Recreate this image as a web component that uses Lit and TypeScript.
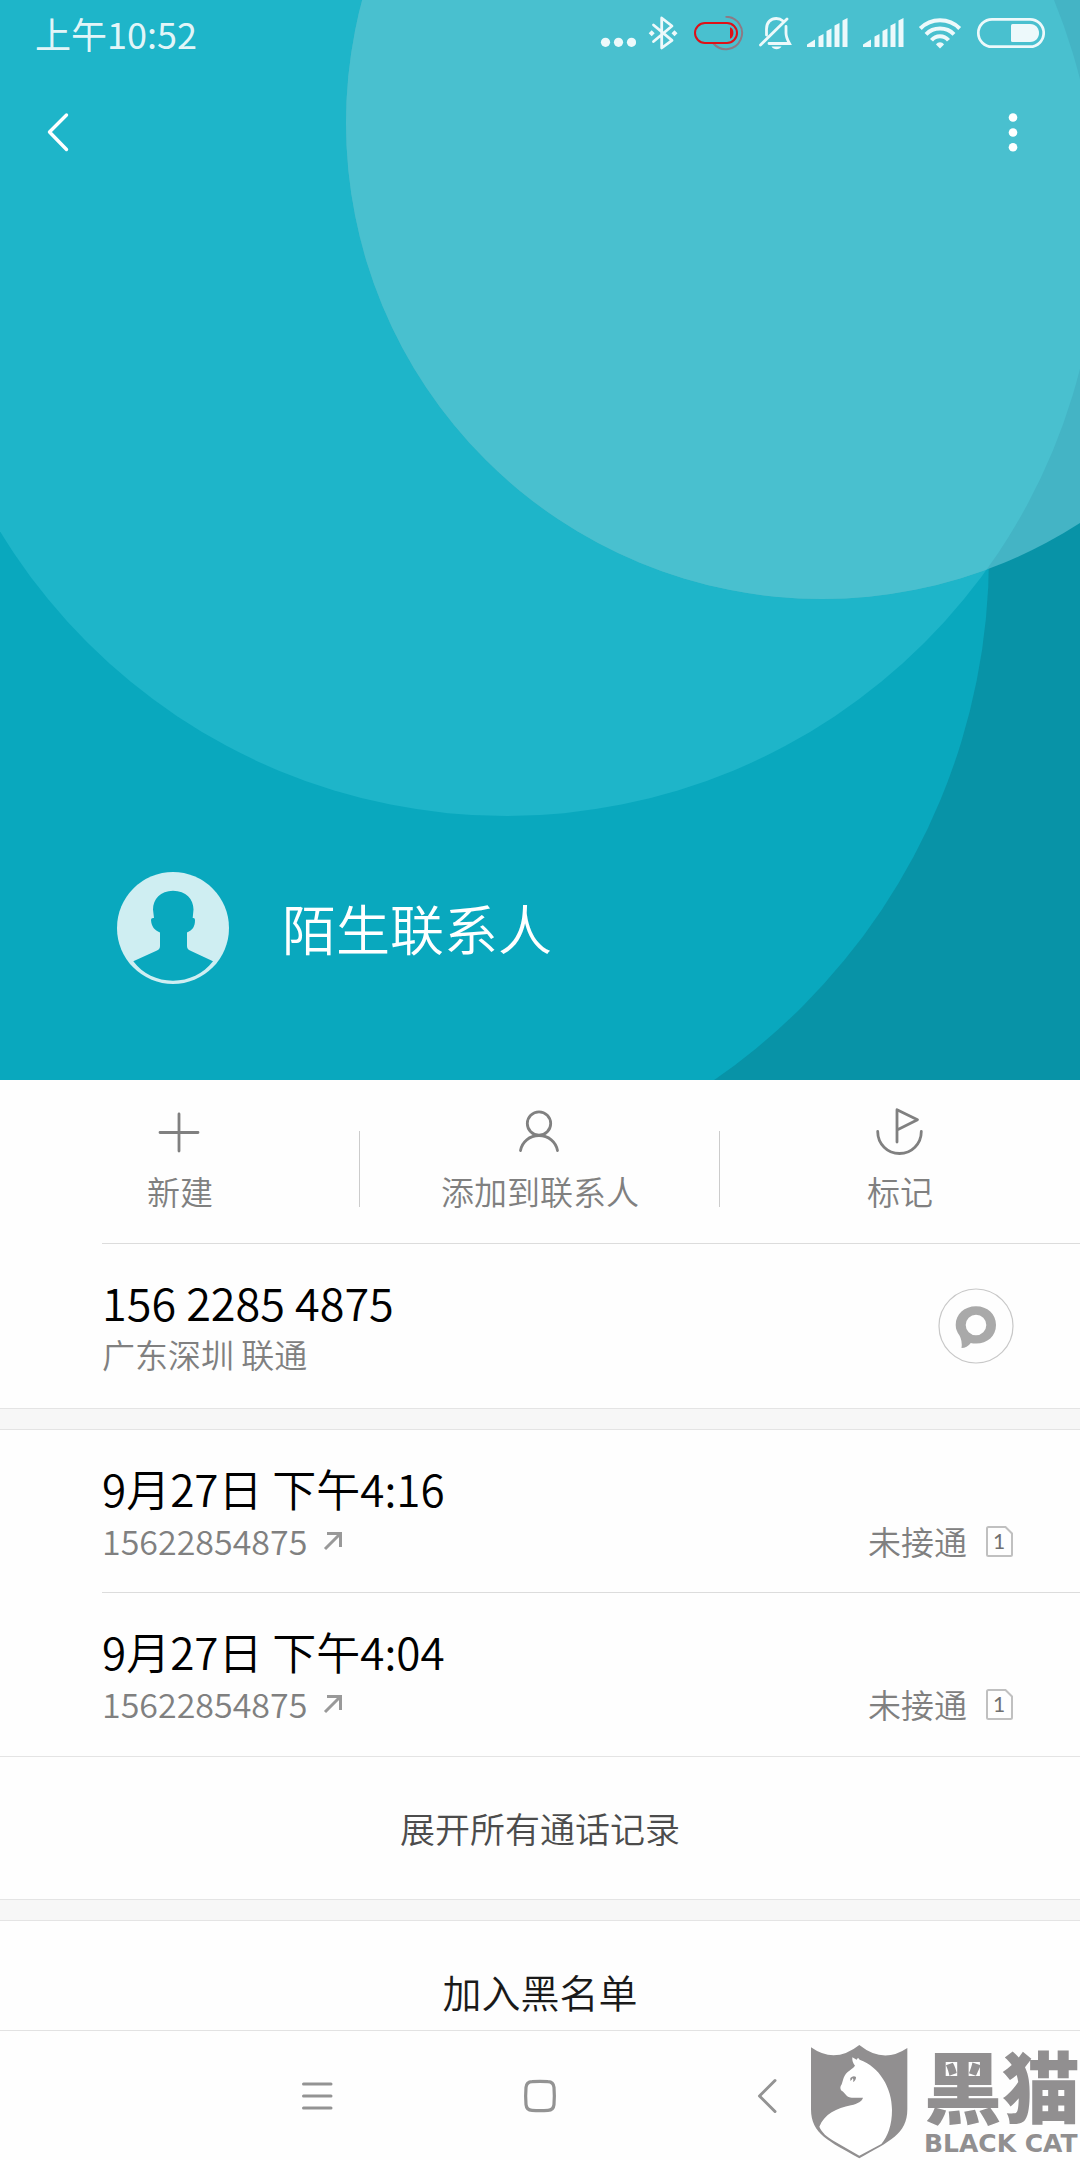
import { LitElement, html, css, svg } from "lit";
import { customElement, property } from "lit/decorators.js";

interface Call {
  when: string;
  number: string;
  result: string;
  sim: string;
}

const calls: Call[] = [
  { when: "9月27日 下午4:16", number: "15622854875", result: "未接通", sim: "1" },
  { when: "9月27日 下午4:04", number: "15622854875", result: "未接通", sim: "1" },
];

const actions = [
  { label: "新建", icon: svg`<path d="M23 6V43M4 24.500H42" />` },
  {
    label: "添加到联系人",
    icon: svg`<circle cx="23" cy="15.500" r="11.700" /><path d="M4.500 42.500C6 34 13.500 27.500 23 27.500S40 34 41.500 42.500" />`,
  },
  {
    label: "标记",
    icon: svg`<path d="M21 34V1.700L41.500 11.700L21 22M1.700 23.500C1.700 36 11.500 45.500 23.500 45.500S45.300 36 45.300 23.500" />`,
  },
];

const signal = html`<svg width="46" height="36" viewBox="0 0 46 36" fill="currentColor" aria-hidden="true">
  <path d="M3 31V28.500L11 23.500V31ZM14.500 31V20.500L19.500 18V31ZM22.500 31V15L27.500 12.500V31ZM30.500 31V9.500L35.500 7V31ZM38.500 31V4.500L43.500 2V31Z" />
</svg>`;

@customElement("status-bar")
class StatusBar extends LitElement {
  static styles = css`
    :host {
      display: flex;
      align-items: center;
      justify-content: space-between;
      height: 68px;
      padding: 0 35px;
      color: rgba(255, 255, 255, 0.9);
    }
    .time {
      font-size: 36px;
      line-height: 50px;
      padding-bottom: 2px;
      font-weight: 400;
    }
    .icons {
      display: flex;
      gap: 10px;
    }
    svg {
      display: block;
    }
  `;
  render() {
    return html`
      <span class="time">上午10:52</span>
      <div class="icons">
        <svg width="38" height="36" viewBox="0 0 38 36" fill="currentColor" aria-hidden="true">
          <circle cx="7.500" cy="26.300" r="4.600" /><circle cx="20.500" cy="26.300" r="4.600" /><circle cx="33.500" cy="26.300" r="4.600" />
        </svg>
        <svg width="36" height="36" viewBox="0 0 36 36" fill="none" stroke="currentColor" stroke-width="2.800" aria-hidden="true">
          <path d="M7.500 9L26 24.300L15.700 32V2L26 10L7.500 25.500" stroke-linejoin="round" stroke-linecap="round" />
          <path d="M5.700 14.300l3 3l-3 3l-3-3zM28.500 14.300l3 3l-3 3l-3-3z" fill="currentColor" stroke="none" />
        </svg>
        <svg width="54" height="36" viewBox="0 0 54 36" fill="none" stroke-width="2" aria-hidden="true">
          <path d="M33.500 .800A16.200 16.200 0 1 1 21.500 27.500" stroke="#8c7a85" />
          <rect x="3" y="7" width="42" height="20" rx="10" stroke="#dd1118" />
          <path d="M38 11.300C42.600 12.300 42.600 21.700 38 22.700Z" fill="#dd1118" />
        </svg>
        <svg width="38" height="36" viewBox="0 0 38 36" fill="none" stroke="currentColor" stroke-width="2.800" stroke-linecap="round" aria-hidden="true">
          <path d="M10.500 19V13C10.500 6 15 2.500 20.300 2.500C23 2.500 25 3.200 27 5M4.500 29L31 3" />
          <path d="M30 10.500V17C30 21 31.500 24 33.500 27.500H13" />
          <path d="M15.500 30.500H25.500C23.500 34 17.500 34 15.500 30.500Z" fill="currentColor" stroke="none" />
        </svg>
        ${signal}${signal}
        <svg width="48" height="36" viewBox="0 0 48 36" fill="none" stroke="currentColor" stroke-width="4" aria-hidden="true">
          <path d="M4.300 12.500C15 1.500 33 1.500 43.700 12.500M10 18.300C17.500 10.600 30.500 10.600 38 18.300M15.500 24.300C20 19 28 19 32.500 24.300" />
          <path d="M20 28.500C22 25.500 26 25.500 28 28.500L24 32.500Z" fill="currentColor" stroke="none" />
        </svg>
        <svg width="71" height="36" viewBox="0 0 71 36" fill="none" aria-hidden="true">
          <rect x="4.300" y="3.300" width="65.400" height="27.400" rx="13.700" stroke="currentColor" stroke-width="2.700" />
          <path d="M38.500 8H56C68 8 68 26 56 26H38.500Q37 26 37 24.500V9.500Q37 8 38.500 8Z" fill="currentColor" />
        </svg>
      </div>
    `;
  }
}

@customElement("call-row")
class CallRow extends LitElement {
  @property({ attribute: false }) call!: Call;
  static styles = css`
    :host {
      display: block;
      box-sizing: border-box;
      min-height: 163px;
      padding: 30px 67px 26px 0;
      border-bottom: 1px solid #dcdcdc;
    }
    .when {
      font-size: 44px;
      line-height: 56px;
      color: #000;
    }
    .detail {
      display: flex;
      align-items: center;
      font-size: 33px;
      line-height: 50px;
      color: #808080;
    }
    .number {
      font-size: 34px;
    }
    .arrow {
      margin-left: 16px;
    }
    .result {
      margin-left: auto;
    }
    .sim {
      margin-left: 19px;
    }
  `;
  render() {
    const c = this.call;
    return html`
      <div class="when">${c.when}</div>
      <div class="detail">
        <span class="number">${c.number}</span>
        <svg class="arrow" width="20" height="20" viewBox="0 0 20 20" fill="none" stroke="#999" stroke-width="3" role="img" aria-label="呼出">
          <path d="M2 18L17 3M4 2.500H17.500V16" />
        </svg>
        <span class="result">${c.result}</span>
        <svg class="sim" width="27" height="31" viewBox="0 0 27 31" fill="none">
          <path d="M2.500 1H19.500L26 7.500V28.500Q26 30 24.500 30H2.500Q1 30 1 28.500V2.500Q1 1 2.500 1Z" stroke="#c0c0c0" stroke-width="2" />
          <text x="13" y="23" text-anchor="middle" font-size="21" font-weight="400" font-family="Lato, sans-serif" fill="#707070">${c.sim}</text>
        </svg>
      </div>
    `;
  }
}

@customElement("black-cat-mark")
class BlackCatMark extends LitElement {
  static styles = css`
    :host {
      display: flex;
      gap: 14px;
      align-items: flex-start;
      color: #918f90;
    }
    svg {
      display: block;
    }
    .words {
      display: flex;
      flex-direction: column;
      padding-top: 8px;
    }
    .cn {
      font-family: "Liberation Sans", "Noto Sans CJK SC", sans-serif;
      font-weight: 900;
      font-size: 78px;
      line-height: 78px;
    }
    .en {
      font-family: "DejaVu Sans", sans-serif;
      font-weight: 700;
      font-size: 25px;
      line-height: 28px;
      white-space: nowrap;
    }
  `;
  render() {
    return html`
      <svg width="100" height="116" viewBox="92 74 300 348" aria-hidden="true">
        <path
          d="M95 84Q167 135 240 77Q312 135 384 86V270C384 345 330 366 240 417C150 366 95 345 95 270Z"
          fill="currentColor"
        />
        <path
          d="M219 114L232 121L236 115L241 121C300 142 338 205 338 272C338 318 325 352 306 374L240 409L162 364C143 353 128 340 120 322C135 285 172 266 215 258C236 252 248 246 251 235C235 235 220 237 208 233C200 230 194 217 185 213Q181 208 184 200C192 190 189 172 205 158C214 150 220 148 227 139C221 132 218 124 219 114Z"
          fill="#fff"
        />
        <path d="M213 176Q222 168 230 173Q230 184 221 188Q224 180 220 176Q218 182 213 185Z" fill="currentColor" />
      </svg>
      <div class="words">
        <span class="cn">黑猫</span>
        <span class="en">BLACK CAT</span>
      </div>
    `;
  }
}

@customElement("app-root")
class AppRoot extends LitElement {
  static styles = css`
    :host {
      display: flex;
      flex-direction: column;
      position: relative;
      min-height: 100vh;
      background: #fefefe;
      font-family: "Noto Sans CJK SC", sans-serif;
      font-weight: 350;
      overflow: hidden;
    }
    button {
      font: inherit;
      color: inherit;
      background: none;
      border: 0;
      padding: 0;
      margin: 0;
      cursor: pointer;
    }
    svg {
      display: block;
    }
    .hero {
      position: relative;
      display: flex;
      flex-direction: column;
      height: 1080px;
      background: #0893a7;
      color: #fff;
    }
    .backdrop {
      position: absolute;
      inset: 0;
      width: 100%;
      height: 100%;
    }
    .hero > :not(.backdrop) {
      position: relative;
    }
    .toolbar {
      display: flex;
      justify-content: space-between;
      padding: 34px 37px 0 28px;
    }
    .person {
      display: flex;
      align-items: center;
      gap: 53px;
      margin: auto 0 0;
      padding: 0 117px 96px;
    }
    h1 {
      margin: 0;
      font-size: 54px;
      line-height: 80px;
      font-weight: 350;
    }
    .actions {
      display: grid;
      grid-template-columns: repeat(3, 1fr);
      height: 163px;
      color: #808080;
    }
    .action {
      display: flex;
      flex-direction: column;
      align-items: center;
      padding-top: 28px;
      gap: 12px;
      font-size: 33px;
      line-height: 46px;
    }
    .cell {
      display: grid;
      background: linear-gradient(#ccc, #ccc) right 51px / 1px 76px no-repeat;
    }
    .cell:last-child {
      background: none;
    }
    .inset {
      margin-left: 102px;
      border-top: 1px solid #dcdcdc;
    }
    .phone {
      display: flex;
      align-items: center;
      justify-content: space-between;
      box-sizing: border-box;
      min-height: 165px;
      padding-right: 66px;
    }
    .number {
      padding-top: 2px;
      font-size: 45px;
      line-height: 54px;
      color: #000;
    }
    .place {
      font-size: 33px;
      line-height: 50px;
      color: #808080;
    }
    .band {
      height: 20px;
      background: #f7f7f7;
      border: solid #e4e4e4;
      border-width: 1px 0;
    }
    .calls {
      padding-left: 102px;
    }
    .expand {
      width: 100%;
      height: 143px;
      padding-bottom: 2px;
      font-size: 35px;
      color: #4c4c4c;
      border-top: 1px solid #e4e4e4;
    }
    .calls call-row:last-child {
      border-bottom: 0;
    }
    .block {
      padding: 40px 0 9px;
      font-size: 39px;
      line-height: 60px;
      color: #1a1a1a;
    }
    .nav {
      flex: 1;
      display: flex;
      align-items: center;
      justify-content: center;
      gap: 175px;
      min-height: 129px;
      border-top: 1px solid #e2e2e2;
    }
    .mark {
      position: absolute;
      right: 0;
      bottom: 0;
    }
  `;

  render() {
    return html`
      <header class="hero">
        <svg class="backdrop" viewBox="0 0 1080 1080" preserveAspectRatio="xMidYMid slice" aria-hidden="true">
          <defs>
            <clipPath id="mid"><circle cx="506" cy="224" r="592" /></clipPath>
          </defs>
          <circle cx="352" cy="556" r="637" fill="#09a8be" />
          <circle cx="506" cy="224" r="592" fill="#1eb5c9" />
          <circle cx="822" cy="123" r="476" fill="#44b4c5" />
          <circle cx="822" cy="123" r="476" fill="#49c0cf" clip-path="url(#mid)" />
        </svg>
        <status-bar></status-bar>
        <div class="toolbar">
          <button aria-label="返回">
            <svg width="60" height="60" viewBox="0 0 60 60" fill="none" stroke="currentColor" stroke-width="3.400" stroke-linecap="round" stroke-linejoin="round">
              <path d="M38.500 13L21.500 30L38.500 47.500" />
            </svg>
          </button>
          <button aria-label="更多">
            <svg width="60" height="60" viewBox="0 0 60 60" fill="currentColor">
              <circle cx="30" cy="15.500" r="4.300" /><circle cx="30" cy="30.500" r="4.300" /><circle cx="30" cy="45.200" r="4.300" />
            </svg>
          </button>
        </div>
        <div class="person">
          <svg width="112" height="112" viewBox="0 0 112 112" aria-hidden="true">
            <circle cx="56" cy="56" r="56" fill="#cfeef2" />
            <path
              d="M56 18.700C69 18.700 76.500 27 76.500 37.500L75.700 46Q78 45.500 78 48C78 55 75.500 58 70 60.500V74Q70 77 73 78.500L96 89.300C86 102 72 108.700 56 108.700S26 102 16.300 89.300L40 78.500Q43 77 43 74V60.500C37.500 58 34.500 55 34 48Q34 45.500 37 46L36 37.500C36 27 43.500 18.700 56 18.700Z"
              fill="#09a8be"
            />
          </svg>
          <h1>陌生联系人</h1>
        </div>
      </header>

      <div class="actions">
        ${actions.map(
          (a) => html`<div class="cell">
            <button class="action">
              <svg width="48" height="48" viewBox="0 0 48 48" fill="none" stroke="currentColor" stroke-width="2.800" stroke-linecap="round" stroke-linejoin="round" aria-hidden="true">
                ${a.icon}
              </svg>
              <span>${a.label}</span>
            </button>
          </div>`
        )}
      </div>

      <section class="inset phone">
        <div>
          <div class="number">156 2285 4875</div>
          <div class="place">广东深圳 联通</div>
        </div>
        <button aria-label="发送短信">
          <svg width="76" height="76" viewBox="0 0 76 76" fill="none">
            <circle cx="38" cy="38" r="37" stroke="#c8c8c8" stroke-width="1.200" />
            <path
              fill-rule="evenodd"
              d="M38 18.200C49.500 18.200 58 26 58 37S49.500 55.500 38 55.500Q35 55.500 32.800 55Q29 60 23.500 60Q24.500 53 21.500 47.500Q17.700 42.500 17.700 37C17.700 26 26.500 18.200 38 18.200ZM38 26.700A10.300 10.300 0 1 0 38 47.300A10.300 10.300 0 1 0 38 26.700Z"
              fill="#a9a9a9"
            />
          </svg>
        </button>
      </section>

      <div class="band"></div>
      <section class="calls">${calls.map((c) => html`<call-row .call=${c}></call-row>`)}</section>
      <button class="expand">展开所有通话记录</button>
      <div class="band"></div>
      <button class="block">加入黑名单</button>

      <nav class="nav">
        <button aria-label="菜单">
          <svg width="48" height="48" viewBox="0 0 48 48" stroke="#939393" stroke-width="3" stroke-linecap="round">
            <path d="M10.500 12H38M10.500 24H38M10.500 36H38" />
          </svg>
        </button>
        <button aria-label="主页">
          <svg width="48" height="48" viewBox="0 0 48 48" fill="none" stroke="#939393" stroke-width="3.200">
            <path d="M16 9.700Q24 9 32 9.700Q37.500 10 38 15.500Q38.700 24 38 32.500Q37.500 38 32 38.300Q24 39 16 38.300Q10.500 38 10 32.500Q9.300 24 10 15.500Q10.500 10 16 9.700Z" />
          </svg>
        </button>
        <button aria-label="后退">
          <svg width="48" height="48" viewBox="0 0 48 48" fill="none" stroke="#939393" stroke-width="3" stroke-linecap="round" stroke-linejoin="round">
            <path d="M36 8.500L20.500 24L36 39.500" />
          </svg>
        </button>
      </nav>
      <black-cat-mark class="mark"></black-cat-mark>
    `;
  }
}
